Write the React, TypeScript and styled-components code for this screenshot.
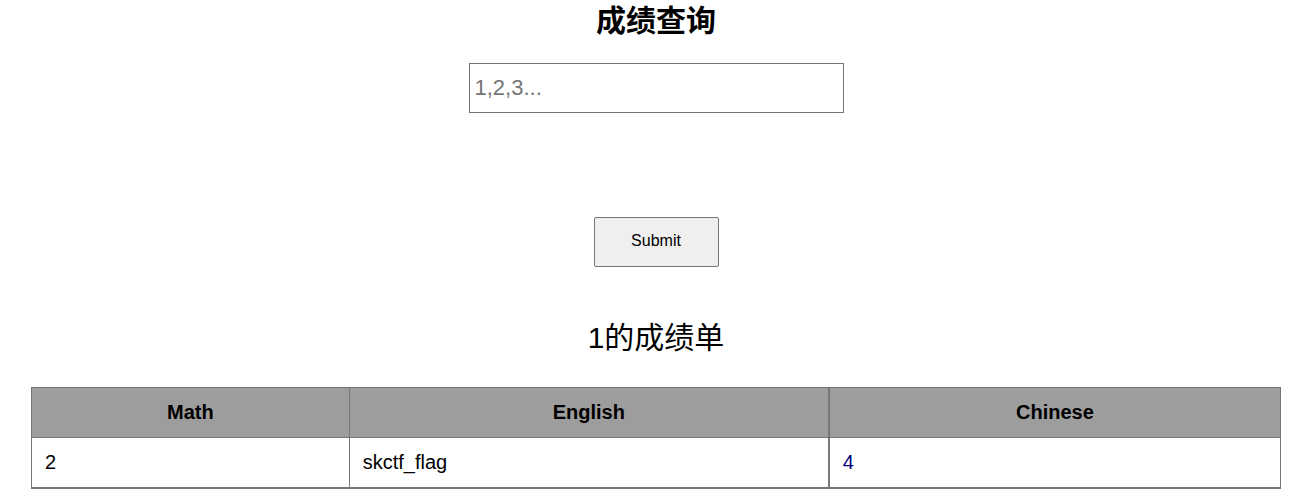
import React from "react";
import styled, { createGlobalStyle } from "styled-components";

const Global = createGlobalStyle`
  html, body { margin: 0; padding: 0; background: #fff; }
  body { font-family: "Liberation Sans", Arial, "Noto Sans CJK SC", sans-serif; color: #000; }
`;

const Page = styled.div`
  width: 1250px;
  margin-left: 31px;
  display: flex;
  flex-direction: column;
  align-items: center;
`;

const Title = styled.h2`
  margin: 3px 0 0;
  font-size: 30px;
  font-weight: bold;
  line-height: 36px;
  font-family: "Liberation Sans", "Noto Sans CJK SC", sans-serif;
`;

const Input = styled.input`
  box-sizing: border-box;
  margin-top: 24px;
  width: 375px;
  height: 50px;
  border: 1px solid #767676;
  border-radius: 0;
  padding: 0 5px;
  font-size: 22px;
  font-family: "Liberation Sans", Arial, sans-serif;
  outline: none;
  &::placeholder { color: #757575; }
`;

const Button = styled.button`
  box-sizing: border-box;
  margin-top: 104px;
  width: 125px;
  height: 50px;
  background: #efefef;
  border: 1px solid #767676;
  border-radius: 2px;
  font-size: 16px;
  font-family: "Liberation Sans", Arial, sans-serif;
  color: #000;
  padding: 0 0 2px;
`;

const Subtitle = styled.h3`
  margin: 51px 0 0;
  font-size: 30px;
  font-weight: normal;
  line-height: 40px;
  font-family: "Liberation Sans", "Noto Sans CJK SC", sans-serif;
`;

const Table = styled.table`
  margin-top: 29px;
  width: 1250px;
  border-collapse: collapse;
  border: 1px solid #777;
  border-bottom-width: 2px;
`;

const Th = styled.th<{ $w: number; $thick?: boolean }>`
  width: ${(p) => p.$w}px;
  height: 50px;
  box-sizing: border-box;
  background: #9d9d9d;
  border: 1px solid #777;
  border-left-width: ${(p) => (p.$thick ? 2 : 1)}px;
  font-size: 20px;
  font-weight: bold;
  text-align: center;
  padding: 0 14px;
`;

const Td = styled.td<{ $color?: string; $thick?: boolean }>`
  height: 50px;
  box-sizing: border-box;
  border: 1px solid #777;
  border-left-width: ${(p) => (p.$thick ? 2 : 1)}px;
  font-size: 20px;
  text-align: left;
  padding: 0 13px;
  color: ${(p) => p.$color || "#000"};
`;

export default function App() {
  return (
    <>
      <Global />
      <Page>
        <Title>成绩查询</Title>
        <Input placeholder="1,2,3..." />
        <Button>Submit</Button>
        <Subtitle>1的成绩单</Subtitle>
        <Table>
          <thead>
            <tr>
              <Th $w={318}>Math</Th>
              <Th $w={480}>English</Th>
              <Th $w={452} $thick>Chinese</Th>
            </tr>
          </thead>
          <tbody>
            <tr>
              <Td>2</Td>
              <Td>skctf_flag</Td>
              <Td $color="#000080" $thick>4</Td>
            </tr>
          </tbody>
        </Table>
      </Page>
    </>
  );
}
